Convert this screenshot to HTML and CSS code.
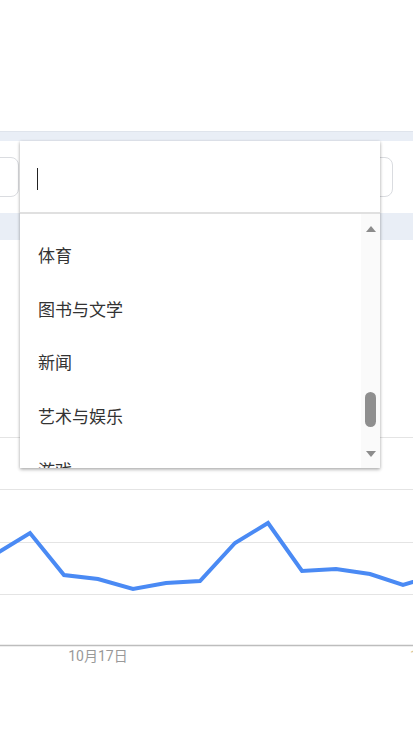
FILE: index.html
```html
<!DOCTYPE html>
<html lang="zh">
<head>
<meta charset="utf-8">
<title>Trends</title>
<link rel="stylesheet" href="styles.css">
</head>
<body>
<div class="page">
  <div class="top"></div>
  <div class="band band-thin"></div>
  <div class="controls">
    <div class="box box-left"></div>
    <div class="box box-right"></div>
  </div>
  <div class="band band-wide"></div>
  <div class="chart">
    <svg class="chart-svg" width="413" height="492" viewBox="0 0 413 492">
      <g class="grid">
        <line x1="0" y1="197.5" x2="413" y2="197.5"/>
        <line x1="0" y1="249.5" x2="413" y2="249.5"/>
        <line x1="0" y1="302.5" x2="413" y2="302.5"/>
        <line x1="0" y1="354.5" x2="413" y2="354.5"/>
      </g>
      <line class="axis" x1="0" y1="405.5" x2="413" y2="405.5"/>
      <polyline class="series" points="-6,315 30,293 64,335 98,339 133,349 166,343 200,341 235,303 268,283 302,331 336,329 370,334 403,345 413,342 420,340"/>
      <text class="tick" x="98" y="421" text-anchor="middle">10月17日</text>
      <text class="tick tick-edge" x="410" y="421">10月24日</text>
    </svg>
  </div>

  <div class="dropdown">
    <div class="dd-input"><span class="caret"></span></div>
    <div class="dd-body">
      <ul class="dd-list">
        <li>体育</li>
        <li>图书与文学</li>
        <li>新闻</li>
        <li>艺术与娱乐</li>
        <li>游戏</li>
      </ul>
      <div class="scrollbar">
        <span class="arrow arrow-up"></span>
        <span class="thumb"></span>
        <span class="arrow arrow-down"></span>
      </div>
    </div>
  </div>
</div>
</body>
</html>
```

FILE: styles.css
```css
* { box-sizing: border-box; }
html, body {
  margin: 0;
  padding: 0;
  background: #ffffff;
  font-family: "Noto Sans CJK SC", "Noto Sans", Roboto, sans-serif;
}
.page {
  position: relative;
  width: 413px;
  height: 732px;
  overflow: hidden;
}
.top { height: 131px; background: #fff; }
.band { background: #e9eef6; }
.band-thin {
  height: 10px;
  border-top: 1px solid #dfe4ec;
}
.band-wide { height: 27px; }
.controls {
  height: 72px;
  display: flex;
  align-items: flex-start;
  padding-top: 16px;
  gap: 8px;
  margin-left: -120px;
}
.box {
  height: 40px;
  border: 1px solid #dadce0;
  border-radius: 8px;
  background: #fff;
}
.box-left { width: 139px; }
.box-right { width: 366px; }
.chart { height: 492px; }
.chart-svg { display: block; }
.grid line { stroke: #e4e4e4; stroke-width: 1; }
.axis { stroke: #bdbdbd; stroke-width: 1.5; }
.series {
  fill: none;
  stroke: #4a8af4;
  stroke-width: 4;
  stroke-linejoin: miter;
}
.tick {
  font-family: Roboto, "Noto Sans CJK SC", sans-serif;
  font-size: 14px;
  fill: #999999;
}
.tick-edge { fill: #d8c89a; }

.dropdown {
  position: absolute;
  top: 141px;
  left: 20px;
  width: 360px;
  height: 327px;
  background: #fff;
  box-shadow: 0 1px 3px rgba(0,0,0,0.28), 0 2px 4px rgba(0,0,0,0.12);
  display: flex;
  flex-direction: column;
}
.dd-input {
  height: 73px;
  border-bottom: 2px solid #e0e0e0;
  padding: 27px 0 0 17px;
}
.caret {
  display: block;
  width: 1px;
  height: 22px;
  background: #222;
}
.dd-body {
  flex: 1;
  display: flex;
  overflow: hidden;
}
.dd-list {
  list-style: none;
  margin: 0;
  padding: 14px 0 0 18px;
  flex: 1;
  overflow: hidden;
}
.dd-list li {
  height: 53.67px;
  line-height: 53.67px;
  font-size: 17px;
  color: #333;
  white-space: nowrap;
}
.scrollbar {
  width: 19px;
  background: #fafafa;
  display: flex;
  flex-direction: column;
  align-items: center;
  padding-top: 12px;
}
.arrow {
  display: block;
  width: 0;
  height: 0;
  border-left: 5px solid transparent;
  border-right: 5px solid transparent;
}
.arrow-up { border-bottom: 6px solid #8c8c8c; }
.arrow-down { border-top: 6px solid #8c8c8c; margin-top: 24px; }
.thumb {
  display: block;
  width: 11px;
  height: 35px;
  margin-top: 160px;
  border-radius: 6px;
  background: #8f8f8f;
}
```
